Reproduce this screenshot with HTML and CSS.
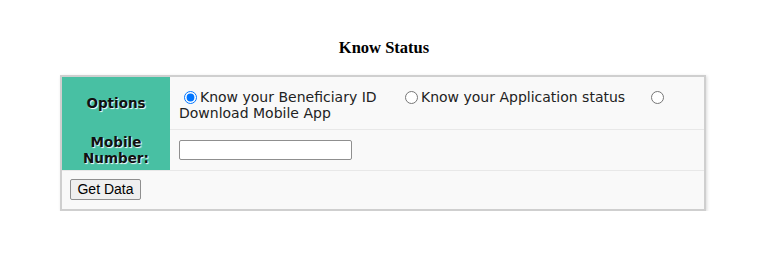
FILE: index.html
```html
<!DOCTYPE html>
<html>
<head>
<meta charset="utf-8">
<link rel="stylesheet" href="styles.css">
</head>
<body>
<h3 class="title">Know Status</h3>
<div class="wrap">
<table class="form">
  <tr>
    <th class="lbl">Options</th>
    <td class="val"><input type="radio" name="opt" class="r1" checked>Know your Beneficiary ID <input type="radio" name="opt" class="rn">Know your Application status <input type="radio" name="opt" class="rn r3">Download Mobile App</td>
  </tr>
  <tr>
    <th class="lbl lbl2">Mobile Number:</th>
    <td class="val val2"><input type="text" class="txt"></td>
  </tr>
  <tr>
    <td class="foot" colspan="2"><button class="btn">Get Data</button></td>
  </tr>
</table>
</div>
</body>
</html>
```
FILE: styles.css
```css
body {
  margin: 8px;
  background: #fff;
  font-family: "Liberation Serif", serif;
}
.title {
  text-align: center;
  font-size: 16.5px;
  font-weight: bold;
  margin: 30px 0 17px;
  color: #000;
}
.wrap {
  width: 642px;
  margin: 0 auto;
  border: 2px solid #cfcfcf;
  box-shadow: 1px 1px 3px rgba(0,0,0,0.15);
  background: #f9f9f9;
  position: relative;
  left: -1px;
}
.form {
  width: 100%;
  border-collapse: collapse;
  font-family: "DejaVu Sans", Verdana, sans-serif;
  font-size: 14px;
  color: #222;
}
.lbl {
  width: 92px;
  background: #48c0a3;
  color: #111;
  font-weight: bold;
  font-size: 13.5px;
  text-align: center;
  vertical-align: middle;
  padding: 4px 8px;
  line-height: 16px;
  text-shadow: 1px 1px 1px #fff;
}
.val {
  padding: 12px 8px 8px 9px;
  line-height: 16px;
  border-bottom: 1px solid #e8e8e8;
  vertical-align: top;
}
.val input[type=radio] {
  margin: 2px 3px 0 5px;
  vertical-align: top;
  width: 13px;
  height: 13px;
}
.val input.rn {
  margin-left: 24px;
}
.val input.r3 {
  margin-left: 21px;
}
.val2 {
  padding: 9px 8px 9px 9px;
  vertical-align: middle;
}
.txt {
  width: 169px;
  height: 16px;
  padding: 1px;
  border: 1px solid #8f8f8f;
  border-radius: 2px;
  display: block;
  background: #fff;
}
.foot {
  padding: 8px 8px 9px 8px;
  border-top: 1px solid #e8e8e8;
}
.btn {
  font-family: "Liberation Sans", Arial, sans-serif;
  font-size: 14px;
  padding: 1px 6px;
  height: 21px;
  width: 71px;
  border: 1px solid #8f8f8f;
  border-radius: 2px;
  background: #efefef;
  color: #000;
}
```
